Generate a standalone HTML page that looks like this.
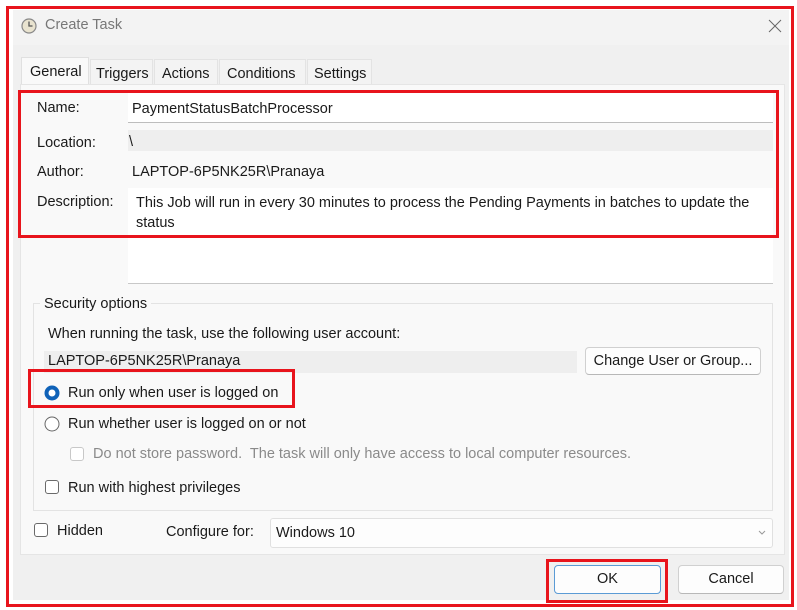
<!DOCTYPE html>
<html><head><meta charset="utf-8"><style>
*{box-sizing:border-box;margin:0;padding:0}
body{width:797px;height:610px;background:#fff;position:relative;overflow:hidden;font-family:"Liberation Sans",sans-serif;font-size:14.5px;color:#1a1a1a}
.a{position:absolute}
.red{position:absolute;border:3px solid #e8141c}
.t{position:absolute;white-space:nowrap;font-size:14.5px}
.btn{position:absolute;background:#fdfdfd;border:1px solid #d0d0d0;border-bottom-color:#b8b8b8;border-radius:4px;text-align:center;font-size:14.5px}
.cb{position:absolute;width:14px;height:14px;border:1px solid #6a6a6a;border-radius:3px;background:#fff}
</style></head><body>
<div class="a" style="left:13px;top:10px;width:776px;height:590px;background:#f0f0f0"></div>
<div class="a" style="left:13px;top:10px;width:776px;height:35px;background:#f3f3f3"></div>
<svg class="a" style="left:21px;top:18px" width="16" height="16"><circle cx="8" cy="8" r="7" fill="#e9e3cf" stroke="#888" stroke-width="1.2"/><path d="M8 3.5V8H11.5" stroke="#555" stroke-width="1.3" fill="none"/></svg>
<div class="t" style="left:45px;top:17px;color:#777">Create Task</div>
<svg class="a" style="left:768px;top:19px" width="14" height="14"><path d="M1 1L13 13M13 1L1 13" stroke="#666" stroke-width="1"/></svg>
<div class="a" style="left:21px;top:57px;width:68px;height:29px;background:#f9f9f9;border:1px solid #e0e0e0;border-bottom:none"></div>
<div class="a" style="left:90px;top:59px;width:63px;height:26px;background:#f3f3f3;border:1px solid #e3e3e3;border-bottom:none"></div>
<div class="a" style="left:154px;top:59px;width:64px;height:26px;background:#f3f3f3;border:1px solid #e3e3e3;border-bottom:none"></div>
<div class="a" style="left:219px;top:59px;width:87px;height:26px;background:#f3f3f3;border:1px solid #e3e3e3;border-bottom:none"></div>
<div class="a" style="left:307px;top:59px;width:65px;height:26px;background:#f3f3f3;border:1px solid #e3e3e3;border-bottom:none"></div>
<div class="t" style="left:30px;top:64px">General</div>
<div class="t" style="left:96px;top:66px">Triggers</div>
<div class="t" style="left:162px;top:66px">Actions</div>
<div class="t" style="left:227px;top:66px">Conditions</div>
<div class="t" style="left:314px;top:66px">Settings</div>
<div class="a" style="left:20px;top:84px;width:765px;height:471px;background:#f9f9f9;border:1px solid #e5e5e5"></div>
<div class="a" style="left:128px;top:93px;width:645px;height:30px;background:#fff;border-bottom:1px solid #bdbdbd"></div>
<div class="a" style="left:128px;top:130px;width:645px;height:21px;background:#eeeeee"></div>
<div class="a" style="left:128px;top:188px;width:645px;height:96px;background:#fff;border-bottom:1px solid #c8c8c8"></div>
<div class="t" style="left:37px;top:100px">Name:</div>
<div class="t" style="left:132px;top:101px">PaymentStatusBatchProcessor</div>
<div class="t" style="left:37px;top:135px">Location:</div>
<div class="t" style="left:129px;top:134px">\</div>
<div class="t" style="left:37px;top:164px">Author:</div>
<div class="t" style="left:132px;top:164px">LAPTOP-6P5NK25R\Pranaya</div>
<div class="t" style="left:37px;top:194px">Description:</div>
<div class="t" style="left:136px;top:195px">This Job will run in every 30 minutes to process the Pending Payments in batches to update the</div>
<div class="t" style="left:136px;top:215px">status</div>
<div class="a" style="left:33px;top:303px;width:740px;height:208px;border:1px solid #e3e3e3"></div>
<div class="t" style="left:40px;top:296px;background:#f9f9f9;padding:0 4px">Security options</div>
<div class="t" style="left:48px;top:326px">When running the task, use the following user account:</div>
<div class="a" style="left:44px;top:351px;width:533px;height:22px;background:#eeeeee"></div>
<div class="t" style="left:48px;top:353px">LAPTOP-6P5NK25R\Pranaya</div>
<div class="btn" style="left:585px;top:347px;width:176px;height:28px;line-height:26px">Change User or Group...</div>
<svg class="a" style="left:44px;top:385px" width="16" height="16"><circle cx="8" cy="8" r="7.5" fill="#0f62b8"/><circle cx="8" cy="8" r="3.5" fill="#fff"/></svg>
<div class="t" style="left:68px;top:385px">Run only when user is logged on</div>
<svg class="a" style="left:44px;top:416px" width="16" height="16"><circle cx="8" cy="8" r="7" fill="#fff" stroke="#666" stroke-width="1"/></svg>
<div class="t" style="left:68px;top:416px">Run whether user is logged on or not</div>
<div class="cb" style="left:70px;top:447px;border-color:#c8c8c8"></div>
<div class="t" style="left:93px;top:446px;color:#8a8a8a">Do not store password.&nbsp; The task will only have access to local computer resources.</div>
<div class="cb" style="left:45px;top:480px"></div>
<div class="t" style="left:68px;top:480px">Run with highest privileges</div>
<div class="cb" style="left:34px;top:523px"></div>
<div class="t" style="left:57px;top:523px">Hidden</div>
<div class="t" style="left:166px;top:524px">Configure for:</div>
<div class="a" style="left:270px;top:518px;width:503px;height:30px;background:#fdfdfd;border:1px solid #e0e0e0;border-radius:3px"></div>
<div class="t" style="left:276px;top:525px">Windows 10</div>
<svg class="a" style="left:758px;top:530px" width="8" height="6"><path d="M1 1L4 4L7 1" stroke="#999" fill="none"/></svg>
<div class="btn" style="left:554px;top:565px;width:107px;height:29px;line-height:27px;border:1px solid #5b9bd5">OK</div>
<div class="btn" style="left:678px;top:565px;width:106px;height:29px;line-height:27px">Cancel</div>
<div class="red" style="left:6px;top:6px;width:788px;height:601px"></div>
<div class="red" style="left:18px;top:90px;width:761px;height:148px"></div>
<div class="red" style="left:28px;top:369px;width:267px;height:39px"></div>
<div class="red" style="left:546px;top:559px;width:122px;height:44px"></div>
</body></html>
